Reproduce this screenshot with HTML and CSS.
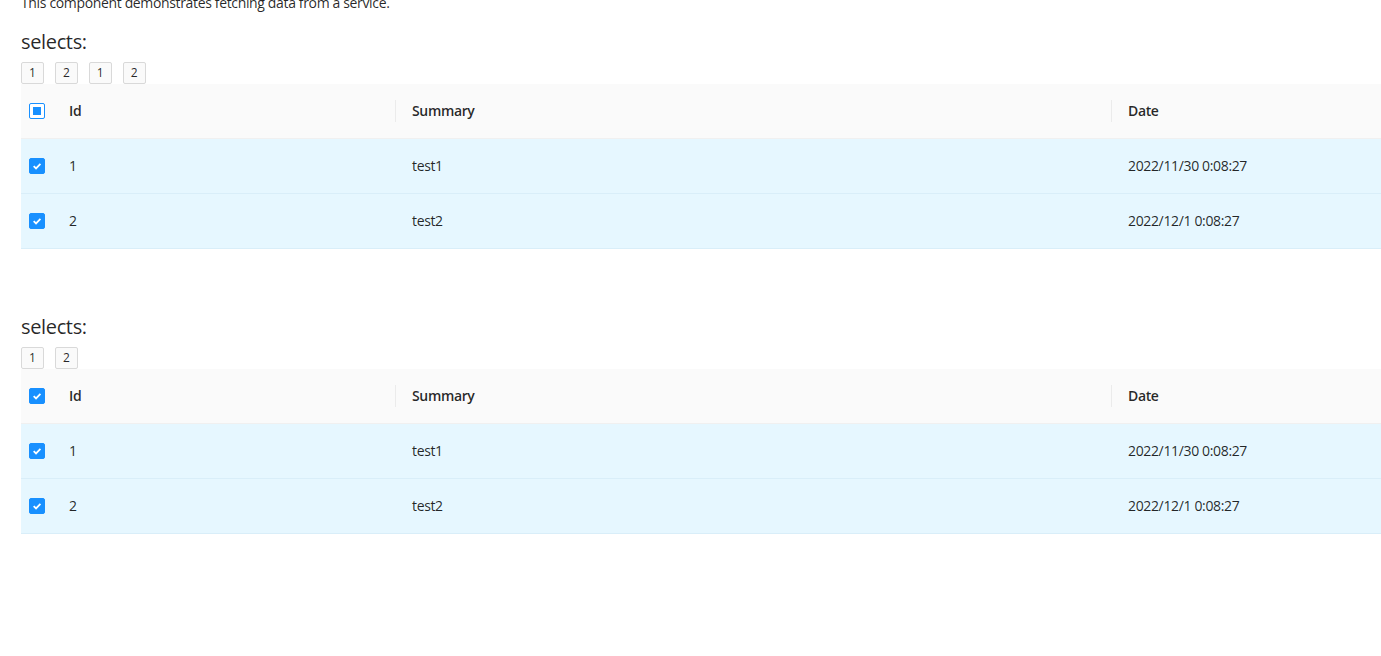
FILE: index.html
```html
<!DOCTYPE html>
<html lang="en">
<head>
    <meta charset="UTF-8">
    <meta name="viewport" content="width=device-width, initial-scale=1.0">
    <title>Fetch data</title>
    <link rel="stylesheet" href="styles.css">
</head>
<body>
    <div class="content">
        <p class="intro">This component demonstrates fetching data from a service.</p>

        <div class="section">
            <h4 class="title">selects:</h4>
            <div class="tags">
                <span class="tag">1</span>
                <span class="tag">2</span>
                <span class="tag">1</span>
                <span class="tag">2</span>
            </div>
            <table class="grid">
                <colgroup>
                    <col class="colSelect">
                    <col class="colId">
                    <col class="colSummary">
                    <col>
                </colgroup>
                <thead>
                    <tr>
                        <th class="selectCell"><span class="checkbox indeterminate"></span></th>
                        <th class="sep">Id</th>
                        <th class="sep">Summary</th>
                        <th>Date</th>
                    </tr>
                </thead>
                <tbody>
                    <tr class="selected">
                        <td class="selectCell"><span class="checkbox checked"><svg viewBox="0 0 16 16"><path d="M4.2 8.1 L6.9 10.8 L11.9 5.6"/></svg></span></td>
                        <td>1</td>
                        <td>test1</td>
                        <td>2022/11/30 0:08:27</td>
                    </tr>
                    <tr class="selected">
                        <td class="selectCell"><span class="checkbox checked"><svg viewBox="0 0 16 16"><path d="M4.2 8.1 L6.9 10.8 L11.9 5.6"/></svg></span></td>
                        <td>2</td>
                        <td>test2</td>
                        <td>2022/12/1 0:08:27</td>
                    </tr>
                </tbody>
            </table>
        </div>

        <div class="section second">
            <h4 class="title">selects:</h4>
            <div class="tags">
                <span class="tag">1</span>
                <span class="tag">2</span>
            </div>
            <table class="grid">
                <colgroup>
                    <col class="colSelect">
                    <col class="colId">
                    <col class="colSummary">
                    <col>
                </colgroup>
                <thead>
                    <tr>
                        <th class="selectCell"><span class="checkbox checked"><svg viewBox="0 0 16 16"><path d="M4.2 8.1 L6.9 10.8 L11.9 5.6"/></svg></span></th>
                        <th class="sep">Id</th>
                        <th class="sep">Summary</th>
                        <th>Date</th>
                    </tr>
                </thead>
                <tbody>
                    <tr class="selected">
                        <td class="selectCell"><span class="checkbox checked"><svg viewBox="0 0 16 16"><path d="M4.2 8.1 L6.9 10.8 L11.9 5.6"/></svg></span></td>
                        <td>1</td>
                        <td>test1</td>
                        <td>2022/11/30 0:08:27</td>
                    </tr>
                    <tr class="selected">
                        <td class="selectCell"><span class="checkbox checked"><svg viewBox="0 0 16 16"><path d="M4.2 8.1 L6.9 10.8 L11.9 5.6"/></svg></span></td>
                        <td>2</td>
                        <td>test2</td>
                        <td>2022/12/1 0:08:27</td>
                    </tr>
                </tbody>
            </table>
        </div>
    </div>
</body>
</html>
```

FILE: styles.css
```css
body {
    font-family: 'Open Sans', 'Noto Sans', sans-serif;
    font-size: 14px;
    line-height: 22px;
    letter-spacing: -0.35px;
    margin: 0;
    color: rgba(0, 0, 0, 0.85);
    background-color: #fff;
    overflow: hidden;
}

.content {
    padding-left: 21px;
    margin-top: -8px;
}

.intro {
    margin: 0 0 14px;
}

.title {
    font-size: 20px;
    line-height: 28px;
    font-weight: 400;
    margin: 0 0 6px;
}

.second {
    margin-top: 64px;
}

.tags {
    display: flex;
    gap: 11px;
    height: 22px;
}

.tag {
    box-sizing: border-box;
    display: inline-block;
    height: 22px;
    padding: 0 7px;
    font-size: 12px;
    line-height: 20px;
    letter-spacing: 0;
    background-color: #fafafa;
    border: 1px solid #d9d9d9;
    border-radius: 2px;
}

.grid {
    width: 100%;
    border-collapse: collapse;
    table-layout: fixed;
}

.colSelect {
    width: 32px;
}

.colId {
    width: 343px;
}

.colSummary {
    width: 716px;
}

.grid th,
.grid td {
    padding: 16px;
    text-align: left;
    border-bottom: 1px solid #f0f0f0;
    height: 22px;
    white-space: nowrap;
}

.grid th {
    position: relative;
    background-color: #fafafa;
    font-weight: 600;
}

.grid th.sep::before {
    content: '';
    position: absolute;
    right: 0;
    top: 50%;
    width: 1px;
    height: 22px;
    transform: translateY(-50%);
    background-color: rgba(0, 0, 0, 0.06);
}

.grid td {
    border-bottom-color: #d9eef9;
}

.selected td {
    background-color: #e6f7ff;
}

.grid .selectCell {
    padding: 0 8px;
    line-height: 0;
}

.checkbox {
    box-sizing: border-box;
    display: inline-block;
    width: 16px;
    height: 16px;
    border: 1px solid #1890ff;
    border-radius: 2px;
    vertical-align: middle;
}

.checkbox.checked {
    background-color: #1890ff;
}

.checkbox.checked svg {
    display: block;
    width: 14px;
    height: 14px;
}

.checkbox.checked path {
    fill: none;
    stroke: #fff;
    stroke-width: 2;
}

.checkbox.indeterminate {
    display: inline-flex;
    align-items: center;
    justify-content: center;
    background-color: #fff;
}

.checkbox.indeterminate::after {
    content: '';
    width: 8px;
    height: 8px;
    background-color: #1890ff;
}
```
